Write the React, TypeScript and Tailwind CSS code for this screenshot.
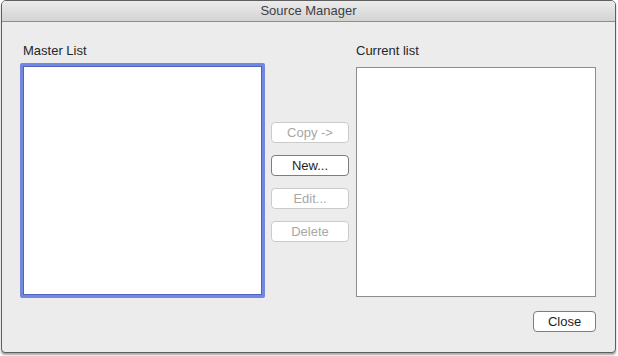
import React from "react";

function Btn({ label, disabled, className = "" }: { label: string; disabled?: boolean; className?: string }) {
  return (
    <button
      className={
        "h-[21px] rounded-[4px] border bg-white text-[13px] leading-none flex items-center justify-center " +
        (disabled ? "border-[#cbcbcb] text-[#a7a7a7] bg-[#f6f6f6] " : "border-[#7d7d7d] text-[#1e1e1e] ") +
        className
      }
    >
      {label}
    </button>
  );
}

export default function App() {
  return (
    <div className="w-[618px] h-[356px] bg-white" style={{ fontFamily: '"Liberation Sans", Arial, sans-serif' }}>
      <div className="ml-[1px] w-[615px] h-[353px] rounded-t-[5px] rounded-b-[4px] border border-[#5e5e5e] bg-[#ececec] overflow-hidden shadow-[0_2px_2px_rgba(0,0,0,0.35)] flex flex-col">
        <div className="h-[21px] shrink-0 bg-gradient-to-b from-[#ebebeb] to-[#d3d3d3] border-b border-[#8f8f8f] flex items-center justify-center text-[13px] text-[#404040]">
          Source Manager
        </div>
        <div className="flex-1 flex pl-[18px] pr-[18px] pt-[21px]">
          <div className="flex flex-col">
            <div className="text-[13px] text-[#262626] h-[16px] leading-[16px] ml-[3px]">Master List</div>
            <div className="mt-[4px] w-[245px] h-[235px] rounded-[2px] border-[3px] border-[#7388dc] bg-white p-0">
              <div className="w-full h-full border border-[#4e63c4] bg-white" />
            </div>
          </div>
          <div className="flex flex-col gap-[12px] pt-[79px] ml-[6px]">
            <Btn label="Copy ->" disabled className="w-[78px]" />
            <Btn label="New..." className="w-[78px]" />
            <Btn label="Edit..." disabled className="w-[78px]" />
            <Btn label="Delete" disabled className="w-[78px]" />
          </div>
          <div className="flex flex-col ml-[7px]">
            <div className="text-[13px] text-[#262626] h-[16px] leading-[16px]">Current list</div>
            <div className="mt-[8px] w-[240px] h-[230px] border border-[#8e8e8e] bg-white" />
            <div className="flex justify-end mt-[14px]">
              <Btn label="Close" className="w-[63px]" />
            </div>
          </div>
        </div>
      </div>
    </div>
  );
}
